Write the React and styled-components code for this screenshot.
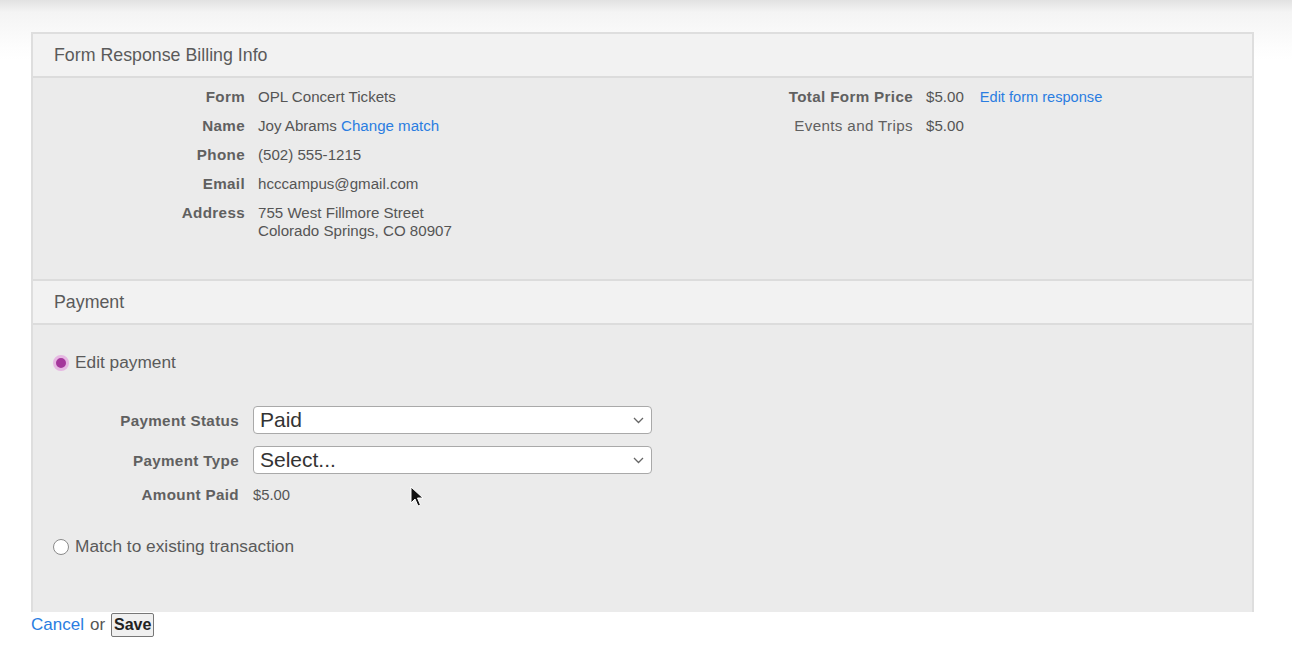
import React from 'react';
import styled, { createGlobalStyle } from 'styled-components';

const GlobalStyle = createGlobalStyle`
  html, body {
    margin: 0;
    padding: 0;
    background: #fff;
  }
  body {
    font-family: "Liberation Sans", Arial, sans-serif;
    color: #555;
  }
`;

const Page = styled.div`
  position: relative;
  min-height: 663px;
  padding: 32px 38px 0 31px;
  box-sizing: border-box;
  background: linear-gradient(#e2e2e2 0px, #f4f4f4 12px, #fdfdfd 48px, #fff 60px) no-repeat;
`;

const Panel = styled.div`
  border: 2px solid #dedede;
  border-bottom: none;
  background: #ebebeb;
`;

const PanelHeader = styled.div`
  height: 42px;
  display: flex;
  align-items: center;
  padding-left: 21px;
  background: #f2f2f2;
  border-bottom: 2px solid #dcdcdc;
  border-top: ${p => (p.$divided ? '2px solid #dcdcdc' : 'none')};
  font-size: 17.8px;
  color: #5a5a5a;
`;

const BillingBody = styled.div`
  height: 191px;
  display: grid;
  grid-template-columns: 726px 1fr;
  padding-top: 10px;
`;

const InfoTable = styled.div`
  display: grid;
  grid-template-columns: ${p => p.$labelWidth}px auto;
  column-gap: 13px;
  row-gap: 11px;
  align-content: start;
  font-size: 15.1px;
  line-height: 18px;
`;

const Label = styled.div`
  text-align: right;
  font-size: 15.2px;
  letter-spacing: 0.35px;
  font-weight: ${p => (p.$plain ? 400 : 700)};
  color: #606060;
  white-space: nowrap;
`;

const Value = styled.div`
  color: #555;
  white-space: nowrap;
`;

const Link = styled.a`
  color: #2a7de1;
  text-decoration: none;
  font-size: ${p => (p.$small ? '14.6px' : 'inherit')};
  margin-left: ${p => p.$gap || 0}px;
  cursor: pointer;
`;

const PaymentBody = styled.div`
  height: 287px;
  padding: 27px 0 0 20px;
  box-sizing: border-box;
`;

const RadioRow = styled.label`
  display: flex;
  align-items: center;
  gap: 6px;
  font-size: 17.3px;
  color: #5a5a5a;
  margin-top: ${p => p.$top || 0}px;
`;

const Radio = styled.span`
  width: 16px;
  height: 16px;
  border-radius: 50%;
  box-sizing: border-box;
  background: ${p => (p.$checked ? '#a4379b' : '#fff')};
  border: ${p => (p.$checked ? '3px solid #e6b7e2' : '1px solid #8a8a8a')};
`;

const FieldGrid = styled.div`
  display: grid;
  grid-template-columns: 186px 399px;
  column-gap: 14px;
  row-gap: 12px;
  align-items: center;
  margin-top: 33px;
`;

const FieldLabel = styled.div`
  text-align: right;
  font-weight: 700;
  font-size: 15.2px;
  letter-spacing: 0.35px;
  color: #606060;
  white-space: nowrap;
`;

const Select = styled.div`
  height: 28px;
  box-sizing: border-box;
  border: 1px solid #a9a9a9;
  border-radius: 4px;
  background: #fff;
  display: flex;
  align-items: center;
  justify-content: space-between;
  padding: 0 7px 0 6px;
  font-size: 21px;
  color: #333;
`;

const AmountValue = styled.div`
  font-size: 14.8px;
  color: #555;
`;

const Actions = styled.div`
  display: flex;
  align-items: center;
  gap: 6px;
  padding-top: 1px;
  font-size: 17px;
  color: #555;
`;

const SaveButton = styled.button`
  font-family: "Liberation Sans", Arial, sans-serif;
  font-size: 16px;
  font-weight: 700;
  color: #222;
  background: #f0f0f0;
  border: 1px solid #777;
  border-radius: 2px;
  padding: 1px 2px;
  height: 24px;
`;

const Cursor = styled.svg`
  position: absolute;
  left: 410px;
  top: 486px;
`;

const Chevron = () => (
  <svg width="11" height="7" viewBox="0 0 11 7">
    <path d="M1 1l4.5 4.5L10 1" fill="none" stroke="#666" strokeWidth="1.3" />
  </svg>
);

const App = () => (
  <>
    <GlobalStyle />
    <Page>
      <Panel>
        <PanelHeader>Form Response Billing Info</PanelHeader>
        <BillingBody>
          <InfoTable $labelWidth={212}>
            <Label>Form</Label>
            <Value>OPL Concert Tickets</Value>
            <Label>Name</Label>
            <Value>
              Joy Abrams <Link>Change match</Link>
            </Value>
            <Label>Phone</Label>
            <Value>(502) 555-1215</Value>
            <Label>Email</Label>
            <Value>hcccampus@gmail.com</Value>
            <Label>Address</Label>
            <Value>
              755 West Fillmore Street
              <br />
              Colorado Springs, CO 80907
            </Value>
          </InfoTable>
          <InfoTable $labelWidth={154}>
            <Label>Total Form Price</Label>
            <Value>
              $5.00<Link $small $gap={16}>Edit form response</Link>
            </Value>
            <Label $plain>Events and Trips</Label>
            <Value>$5.00</Value>
          </InfoTable>
        </BillingBody>
        <PanelHeader $divided>Payment</PanelHeader>
        <PaymentBody>
          <RadioRow>
            <Radio $checked />
            Edit payment
          </RadioRow>
          <FieldGrid>
            <FieldLabel>Payment Status</FieldLabel>
            <Select>
              Paid
              <Chevron />
            </Select>
            <FieldLabel>Payment Type</FieldLabel>
            <Select>
              Select...
              <Chevron />
            </Select>
            <FieldLabel>Amount Paid</FieldLabel>
            <AmountValue>$5.00</AmountValue>
          </FieldGrid>
          <RadioRow $top={33}>
            <Radio />
            Match to existing transaction
          </RadioRow>
        </PaymentBody>
      </Panel>
      <Actions>
        <Link>Cancel</Link>
        or
        <SaveButton>Save</SaveButton>
      </Actions>
      <Cursor width="14" height="22" viewBox="0 0 14 22">
        <path d="M1 1v16l4-4 3 7 2.5-1-3-7h5.5z" fill="#111" stroke="#fff" strokeWidth="1" />
      </Cursor>
    </Page>
  </>
);

export default App;
